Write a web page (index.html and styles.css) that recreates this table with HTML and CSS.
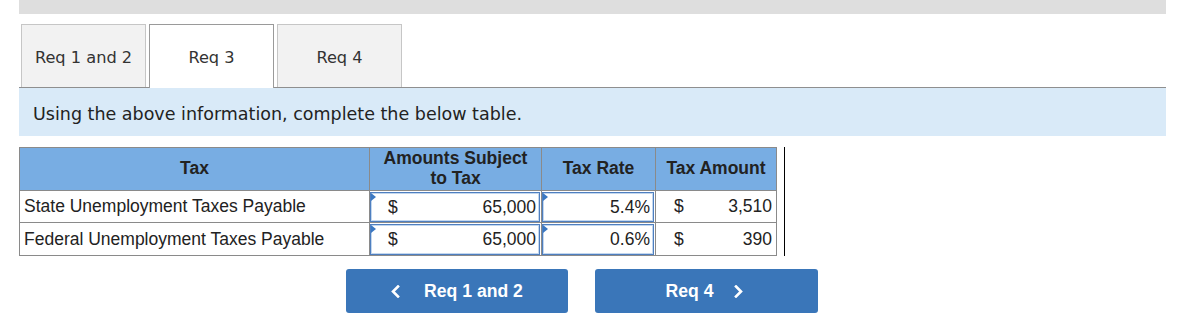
FILE: index.html
```html
<!DOCTYPE html>
<html>
<head>
<meta charset="utf-8">
<link rel="stylesheet" href="styles.css">
</head>
<body>
<div class="page">
  <div class="topbar"></div>
  <div class="tabs">
    <div class="tab">Req 1 and 2</div>
    <div class="tab active">Req 3</div>
    <div class="tab">Req 4</div>
  </div>
  <div class="info">Using the above information, complete the below table.</div>
  <div class="tablewrap">
    <table class="grid">
      <colgroup>
        <col class="c1"><col class="c2"><col class="c3"><col class="c4">
      </colgroup>
      <thead>
        <tr>
          <th>Tax</th>
          <th>Amounts Subject<br>to Tax</th>
          <th>Tax Rate</th>
          <th>Tax Amount</th>
        </tr>
      </thead>
      <tbody>
        <tr class="r1">
          <td class="label">State Unemployment Taxes Payable</td>
          <td class="inp"><div class="box"><span class="flag"></span><span class="cur">$</span><span class="val">65,000</span></div></td>
          <td class="inp"><div class="box"><span class="flag"></span><span class="val">5.4%</span></div></td>
          <td class="amt"><span class="cur">$</span><span class="val">3,510</span></td>
        </tr>
        <tr class="r2">
          <td class="label">Federal Unemployment Taxes Payable</td>
          <td class="inp"><div class="box"><span class="flag"></span><span class="cur">$</span><span class="val">65,000</span></div></td>
          <td class="inp"><div class="box"><span class="flag"></span><span class="val">0.6%</span></div></td>
          <td class="amt"><span class="cur">$</span><span class="val">390</span></td>
        </tr>
      </tbody>
    </table>
  </div>
  <div class="nav">
    <button class="btn prev"><svg class="chev" width="9" height="13" viewBox="0 0 9 13"><polyline points="7,1.5 2,6.5 7,11.5" fill="none" stroke="#ffffff" stroke-width="2.6" stroke-linecap="square"/></svg><span>Req 1 and 2</span></button>
    <button class="btn next"><span>Req 4</span><svg class="chev" width="9" height="13" viewBox="0 0 9 13"><polyline points="2,1.5 7,6.5 2,11.5" fill="none" stroke="#ffffff" stroke-width="2.6" stroke-linecap="square"/></svg></button>
  </div>
</div>
</body>
</html>
```

FILE: styles.css
```css
html, body {
  margin: 0;
  padding: 0;
  background: #ffffff;
}

.page {
  width: 1147px;
  margin-left: 19px;
}

.topbar {
  height: 14px;
  background: #dedede;
}

.tabs {
  display: flex;
  gap: 3px;
  padding-left: 2px;
  margin-top: 10px;
  height: 63px;
  border-bottom: 1px solid #8f8f8f;
}

.tab {
  box-sizing: border-box;
  width: 125px;
  height: 63px;
  border: 1px solid #c6c6c6;
  border-bottom: none;
  background: #f2f2f2;
  display: flex;
  align-items: center;
  justify-content: center;
  font-family: "DejaVu Sans", Verdana, sans-serif;
  font-size: 16.2px;
  color: #333333;
  padding-top: 2px;
}

.tab.active {
  height: 64px;
  background: #ffffff;
  border-color: #9a9a9a;
  position: relative;
  z-index: 1;
  padding-bottom: 1px;
}

.info {
  box-sizing: border-box;
  height: 48px;
  background: #d9eaf8;
  padding-left: 14px;
  display: flex;
  align-items: center;
  font-family: "DejaVu Sans", Verdana, sans-serif;
  font-size: 17.5px;
  color: #222222;
  padding-top: 4px;
}

.tablewrap {
  margin-top: 11px;
  display: inline-block;
  padding-right: 7px;
  border-right: 1px solid #000000;
  vertical-align: top;
}

.grid {
  border-collapse: collapse;
  table-layout: fixed;
  width: 757px;
  font-family: "Liberation Sans", Arial, sans-serif;
  font-size: 17.5px;
  line-height: 20px;
  color: #222222;
}

.c1 { width: 350px; }
.c2 { width: 172px; }
.c3 { width: 114px; }
.c4 { width: 121px; }

.grid thead tr {
  height: 43px;
}

.grid th {
  background: #78ade3;
  border: 1px solid #8a8a8a;
  padding: 0 0 2px 0;
  font-weight: bold;
  line-height: 20px;
  text-align: center;
}

.grid tr.r1 {
  height: 32px;
}

.grid tr.r2 {
  height: 33px;
}

.grid td {
  border: 1px solid #8a8a8a;
  padding: 0;
}

.grid td.label {
  padding: 0 0 1px 4px;
  white-space: nowrap;
}

.grid td.inp {
  padding: 0;
}

.box {
  position: relative;
  box-sizing: border-box;
  height: 30px;
  margin: 0 1px 0 0;
  border: 1px solid #4f7fc0;
  box-shadow: inset 0 0 0 1px #c3d7ee;
  background: #ffffff;
  display: flex;
  align-items: center;
  padding: 0 3px 0 17px;
}

.r2 .box {
  height: 31px;
}

.flag {
  position: absolute;
  left: 0;
  top: 0;
  width: 0;
  height: 0;
  border-top: 4px solid transparent;
  border-bottom: 4px solid transparent;
  border-left: 5px solid #3b78c2;
}

.cur {
  flex: none;
}

.val {
  flex: 1;
  text-align: right;
}

.grid td.amt {
  padding: 0 4px 1px 18px;
}

.grid td.amt .cur {
  float: left;
}

.grid td.amt .val {
  float: right;
}

.nav {
  display: flex;
  gap: 27px;
  padding-left: 327px;
  margin-top: 13px;
}

.btn {
  box-sizing: border-box;
  height: 44px;
  width: 222px;
  background: #3a76b9;
  border: none;
  border-radius: 3px;
  color: #ffffff;
  font-family: "Liberation Sans", Arial, sans-serif;
  font-weight: bold;
  font-size: 17.6px;
  display: flex;
  align-items: center;
  justify-content: center;
  gap: 24px;
  padding: 0;
}

.btn.next {
  width: 223px;
  gap: 21px;
  padding-right: 4px;
}

.chev {
  display: block;
}
```
